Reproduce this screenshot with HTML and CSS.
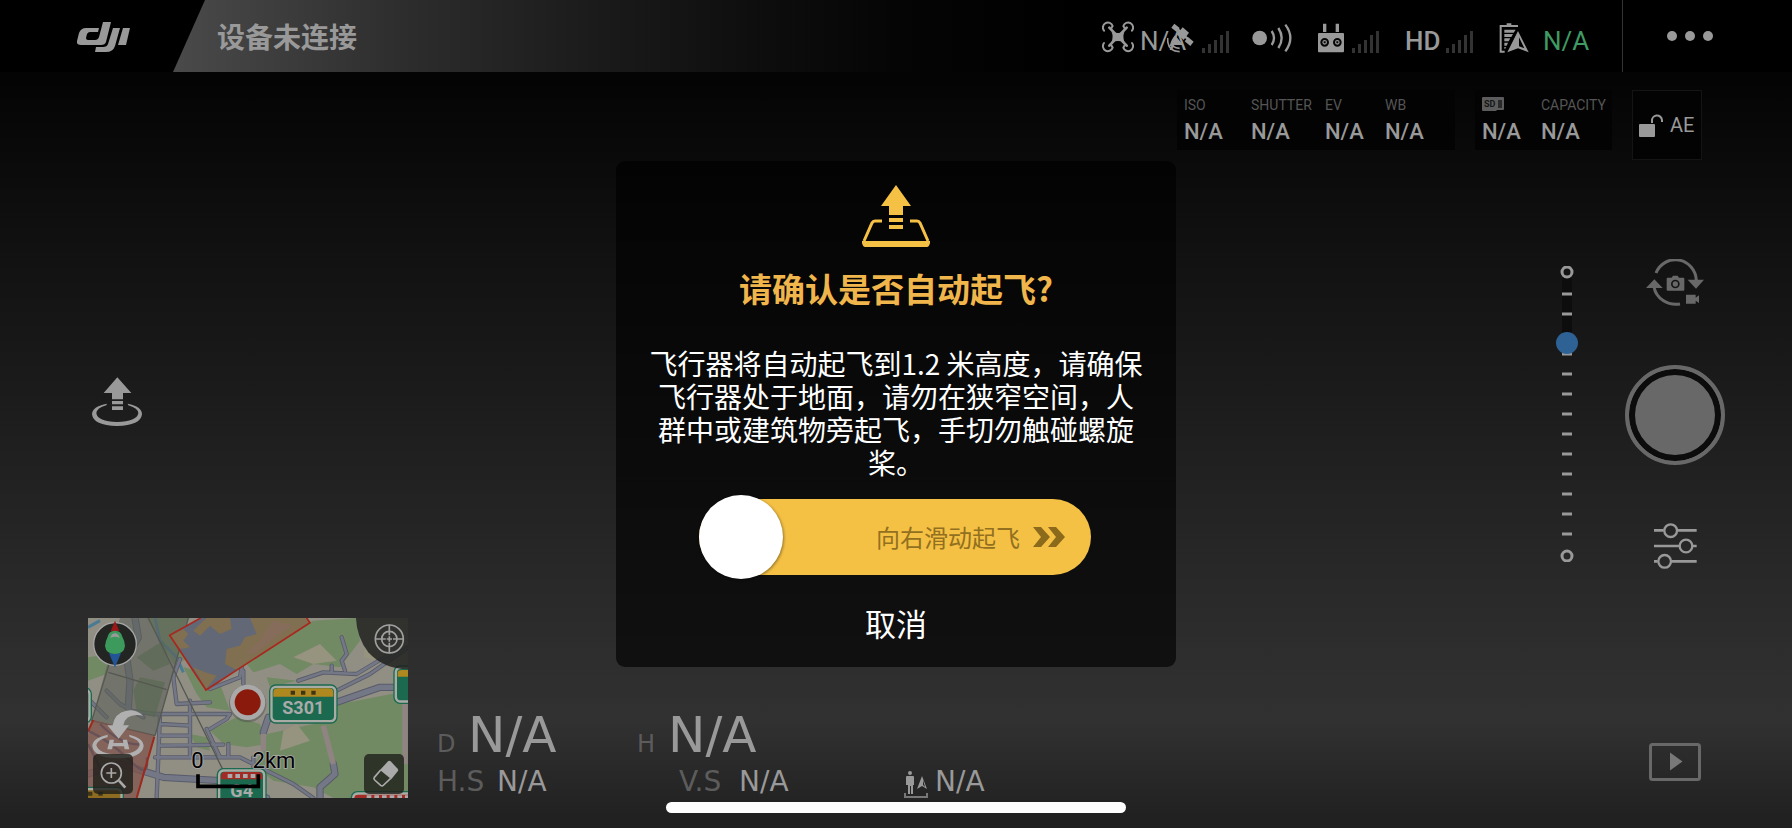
FILE: index.html
```
<!DOCTYPE html>
<html lang="zh-CN">
<head>
    <meta charset="UTF-8">
    <meta name="viewport" content="width=device-width, initial-scale=1.0">
    <title>DJI GO 4</title>
    <link rel="stylesheet" href="styles.css">
</head>
<body>
    <header class="topbar">
        <a class="logo" href="#" aria-label="DJI">
            <svg width="53" height="30" viewBox="0 0 53 30">
                <path d="M26 0H34L29 20Q28 23 24 23H4Q-1 23 0 19L2 11Q4 6 9 6H22L21 10H13Q11 10 10 12L9 16Q9 18 11 18H18Q21 18 22 15Z"/>
                <path d="M36 6H43L38 24Q36 30 29 30H18L19 25H26Q30 25 31 22Z"/>
                <path d="M46 6H53L49 23H41Z"/>
            </svg>
        </a>
        <h1 class="device-title">设备未连接</h1>

        <div class="status">
            <div class="status-item">
                <svg width="32" height="32" viewBox="69 65 96 96">
                    <g fill="none" stroke="#999" stroke-width="6" stroke-linecap="round">
                        <path d="M75 94A15 15 0 1 1 101 80L97 87M159 94A15 15 0 1 0 133 80L137 87M75 131A15 15 0 1 0 101 145L97 138M159 131A15 15 0 1 1 133 145L137 138"/>
                        <path stroke-width="8" d="M91 85L143 139M143 85L91 139"/>
                    </g>
                    <path fill="#999" d="M98 98Q117 104 136 98Q130 113 137 129Q117 121 97 129Q104 113 98 98Z"/>
                </svg>
                <span class="status-text gps-text">N/A</span>
                <svg class="satellite" width="27" height="30" viewBox="262 67 81 90">
                    <g fill="#999">
                        <path d="M284 69L300 82L291 94L275 81ZM309 80L328 96L312 118L292 101ZM325 109L342 123L332 136L315 122ZM292 88L298 84L329 114L324 120Z"/>
                        <path d="M286 104L306 128L270 137Q275 115 286 104Z"/>
                    </g>
                    <path fill="none" stroke="#999" stroke-width="5" d="M264 112Q262 151 300 153M277 124Q276 142 300 143"/>
                </svg>
                <svg class="bars" width="27" height="22" viewBox="0 0 27 22"><path d="M0 17h3v5h-3zM6 13h3v9h-3zM12 9h3v13h-3zM18 4h3v18h-3zM24 0h3v22h-3z"/></svg>
            </div>
            <div class="status-item vision">
                <svg width="40" height="30" viewBox="515 70 120 90">
                    <circle cx="538" cy="115" r="22" fill="#999"/>
                    <path fill="none" stroke="#999" stroke-width="7" d="M574 94Q588 115 574 136M594 85Q614 115 594 145M615 75Q645 115 615 155"/>
                </svg>
            </div>
            <div class="status-item">
                <svg width="26" height="30" viewBox="714 69 78 90">
                    <path fill="#999" d="M729 71H739V96H729ZM767 71H777V96H767ZM717 99H789Q792 99 792 102V154Q792 157 789 157H717Q714 157 714 154V102Q714 99 717 99Z"/>
                    <circle cx="734" cy="127" r="10" fill="#999" stroke="#050505" stroke-width="6"/>
                    <circle cx="772" cy="127" r="10" fill="#999" stroke="#050505" stroke-width="6"/>
                    <path fill="#050505" d="M731 124h6v6h-6zM769 124h6v6h-6z"/>
                </svg>
                <svg class="bars" width="27" height="22" viewBox="0 0 27 22"><path d="M0 17h3v5h-3zM6 13h3v9h-3zM12 9h3v13h-3zM18 4h3v18h-3zM24 0h3v22h-3z"/></svg>
            </div>
            <div class="status-item">
                <span class="status-text hd-text">HD</span>
                <svg class="bars" width="27" height="22" viewBox="0 0 27 22"><path d="M0 17h3v5h-3zM6 13h3v9h-3zM12 9h3v13h-3zM18 4h3v18h-3zM24 0h3v22h-3z"/></svg>
            </div>
            <div class="status-item">
                <svg width="30" height="30" viewBox="208 68 90 90">
                    <g fill="#999">
                        <path d="M231 69h14v5h20v6h-49v71h9v6h-15v-83h21z"/>
                        <path d="M224 88h34l-6 9h-28zM224 101h26l-5 9h-21zM224 114h18l-5 9h-13zM224 127h11l-4 9h-7zM224 140h5l-2 5h-3z"/>
                        <path fill-rule="evenodd" d="M265 92L297 156L265 144L233 156ZM268 111V138L284 144Z"/>
                    </g>
                </svg>
                <span class="status-text battery-text">N/A</span>
            </div>
        </div>
        <button class="menu" type="button" aria-label="更多">
            <svg width="46" height="10" viewBox="0 0 46 10"><circle cx="5" cy="5" r="5"/><circle cx="23" cy="5" r="5"/><circle cx="41" cy="5" r="5"/></svg>
        </button>
    </header>

    <main class="stage">
        <div class="camera-bar">
            <dl class="camera-info">
                <div class="w-shutter"><dt>ISO</dt><dd>N/A</dd></div>
                <div class="w-ev"><dt>SHUTTER</dt><dd>N/A</dd></div>
                <div class="w-wb"><dt>EV</dt><dd>N/A</dd></div>
                <div class="w-last"><dt>WB</dt><dd>N/A</dd></div>
            </dl>
            <dl class="camera-info">
                <div class="w-sd">
                    <dt>
                        <svg width="22" height="14" viewBox="0 0 22 14" aria-label="SD">
                            <path fill="#5c5c5c" d="M1 0h20q1 0 1 1v11q0 1-1 1h-6l-1 1h-13q-1 0-1-1v-12q0-1 1-1z"/>
                            <text x="2" y="10" class="sd-text">SD</text>
                            <path fill="#2a2a2a" d="M16 3h4v8h-4z"/>
                        </svg>
                    </dt>
                    <dd>N/A</dd>
                </div>
                <div class="w-capacity"><dt>CAPACITY</dt><dd>N/A</dd></div>
            </dl>
            <button class="ae-lock" type="button">
                <svg width="25" height="23" viewBox="0 0 25 23">
                    <rect x="0" y="10" width="16" height="13" rx="1" fill="#999"/>
                    <path d="M13 9V7a5 5 0 0 1 10-1v2" fill="none" stroke="#999" stroke-width="2"/>
                </svg>
                AE
            </button>
        </div>

        <div class="middle">
            <button class="icon-button takeoff" type="button" aria-label="自动起飞">
                <svg width="50" height="49" viewBox="66 78 150 147">
                    <path fill="#999" d="M142 79L184 126H159V145H126V126H101ZM126 150H159V160H126ZM126 166H159V177H126Z"/>
                    <path fill="#999" fill-rule="evenodd" d="M111 158Q66 166 66 190Q70 224 141 225Q212 224 216 190Q216 166 173 158L175 163Q205 172 205 187Q200 212 141 213Q83 212 79 187Q80 171 109 163Z"/>
                </svg>
            </button>

            <div class="ev-slider">
                <svg width="22" height="296" viewBox="0 0 22 296">
                    <rect x="6" y="12" width="10" height="64" fill="#0d0d0d"/>
                    <g fill="none" stroke="#999" stroke-width="3">
                        <circle cx="11" cy="6" r="5"/>
                        <circle cx="11" cy="290" r="5"/>
                        <path d="M6 28h10M6 48h10M6 88h10M6 108h10M6 128h10M6 148h10M6 168h10M6 188h10M6 208h10M6 228h10M6 248h10M6 268h10"/>
                    </g>
                </svg>
                <input type="range" min="0" max="100" value="24" aria-label="云台俯仰">
            </div>

            <div class="shoot">
                <button class="icon-button" type="button" aria-label="拍照录像切换">
                    <svg width="58" height="48" viewBox="318 53 174 144">
                        <g fill="none" stroke="#686868" stroke-width="9">
                            <path d="M348 95A63 65 0 0 1 469 117"/>
                            <path d="M342 137A67 62 0 0 0 420 188"/>
                        </g>
                        <path fill="#686868" d="M443 115H492L468 142ZM318 140L343 114L368 140ZM438 160H467V169L477 162V185L467 178V187H438Z"/>
                        <path fill="#686868" fill-rule="evenodd" d="M383 109H395L399 103H413L417 109H430Q433 109 433 112V145Q433 148 430 148H383Q380 148 380 145V112Q380 109 383 109ZM406 115A13 13 0 1 0 406 141A13 13 0 1 0 406 115ZM406 120A8 8 0 1 1 406 136A8 8 0 1 1 406 120Z"/>
                    </svg>
                </button>
                <button class="shutter" type="button" aria-label="拍照"></button>
                <button class="icon-button" type="button" aria-label="相机设置">
                    <svg width="43" height="46" viewBox="339 218 129 138">
                        <g fill="none" stroke="#999" stroke-width="7">
                            <path stroke-width="8" d="M339 240H368M410 240H467M339 287H414M456 287H467M339 333H350M392 333H467"/>
                            <circle cx="389" cy="241" r="19"/><circle cx="435" cy="287" r="19"/><circle cx="371" cy="333" r="19"/>
                        </g>
                    </svg>
                </button>
            </div>
        </div>

        <div class="bottom">
            <div class="map">
                <svg class="map-canvas" width="320" height="180" viewBox="24 52 960 540">
                    <rect x="24" y="52" width="960" height="540" fill="#918e84"/>
                    <!-- parks and woods -->
                    <g fill="#728a64">
                        <path d="M200 52H330L300 90L340 170L280 190L240 120ZM560 120L700 60L830 52L840 120L780 200L700 190L650 220L600 190L520 215L500 190Z"/>
                        <path d="M310 200L370 215L420 250L450 330L380 320L350 280ZM560 400L700 370L780 310L984 270V592H760L700 560L580 540L520 490L550 450ZM390 390L470 350L540 370L560 430L500 440L430 430Z"/>
                        <path d="M24 170L90 160L80 220L24 240ZM330 400L380 410L390 450L350 440ZM560 230L650 240L570 260Z"/>
                    </g>
                    <path fill="#96937f" d="M610 390L650 370L690 420L600 450ZM640 170L720 130L770 180L700 190ZM860 100L960 160L930 190L850 170Z"/>
                    <g fill="none" stroke="#4b7a93" stroke-width="9"><path d="M24 80L60 60M225 52L240 120L290 170L310 215"/></g>
                    <!-- roads -->
                    <g fill="none" stroke="#585b69" stroke-linejoin="round" stroke-linecap="round">
                        <path stroke-width="22" d="M165 52L175 110L140 170L150 240L145 320M24 520L120 490L250 530L420 540L560 592M984 260H900L770 305M565 350L550 395M760 490L765 520L720 560V592"/>
                        <path stroke-width="13" d="M490 170L480 230L390 265M490 210V250M300 175L280 230L290 310L390 305M150 330L220 340H450L440 355L390 385M655 240L730 215L830 220L930 160M755 195V215M785 110L800 160L785 180L795 210M770 270L870 220L984 140M240 340L230 592M330 300V470M240 370L330 375M240 405H330M240 435L430 432M225 470H480L640 550L700 592M30 300L80 350M80 270L120 310L190 350M445 430V470M380 385L420 470M520 470V500"/>
                    </g>
                    <g fill="none" stroke="#747785" stroke-linejoin="round" stroke-linecap="round">
                        <path stroke-width="16" d="M165 52L175 110L140 170L150 240L145 320M24 520L120 490L250 530L420 540L560 592M984 260H900L770 305M565 350L550 395M760 490L765 520L720 560V592"/>
                        <path stroke-width="8" d="M490 170L480 230L390 265M490 210V250M300 175L280 230L290 310L390 305M150 330L220 340H450L440 355L390 385M655 240L730 215L830 220L930 160M755 195V215M785 110L800 160L785 180L795 210M770 270L870 220L984 140M240 340L230 592M330 300V470M240 370L330 375M240 405H330M240 435L430 432M225 470H480L640 550L700 592M30 300L80 350M80 270L120 310L190 350M445 430V470M380 385L420 470M520 470V500"/>
                    </g>
                    <path fill="none" stroke="#8f8482" stroke-width="16" d="M730 375L760 490M550 400V450M975 310V490"/>
                    <!-- restricted zones -->
                    <path fill="#5d6058" fill-opacity=".6" d="M120 52H325L225 405L35 360Z"/>
                    <path fill="#566950" fill-opacity=".6" d="M180 230L255 245L225 350L170 330L160 270ZM170 170L250 120L270 190L220 210Z"/>
                    <path fill="none" stroke="#555851" stroke-width="4" d="M325 52L225 405M85 215L260 267M100 150L35 360L225 405M205 52L430 510"/>
                    <path fill="#80544c" fill-opacity=".75" d="M40 358L223 405L170 592H24V400Z"/>
                    <path fill="none" stroke="#685257" stroke-width="7" d="M24 390Q90 420 150 480T200 470M60 370Q130 440 190 430M24 430L90 560"/>
                    <path fill="none" stroke="#9d281d" stroke-width="6" d="M24 392L40 358M223 408L170 592"/>
                    <path fill="#626875" d="M362 52H680L690 66L378 268L269 104Z"/>
                    <path fill="#816f51" d="M360 70L380 52H450L455 85L420 100L390 75L360 105L340 90ZM510 52H680L688 66L470 208L435 190L440 145L480 135L495 110L530 100ZM270 106L310 85L325 100L310 120L330 140L300 145ZM340 200L375 215L410 225L378 266Z"/>
                    <path fill="#8a6d63" d="M580 60L640 75L600 100L520 160L500 155L540 120Z" fill-opacity=".6"/>
                    <path fill="none" stroke="#a9271c" stroke-width="5" d="M362 52L269 104L378 268L690 66L680 52"/>
                    <!-- road shields -->
                    <g stroke="#1b6a50" stroke-width="4">
                        <rect x="569" y="253" width="202" height="114" rx="18" fill="#a9aba5"/>
                        <rect x="412" y="504" width="146" height="114" rx="18" fill="#a9aba5"/>
                        <rect x="942" y="196" width="90" height="112" rx="18" fill="#a9aba5"/>
                        <rect x="814" y="573" width="220" height="60" rx="18" fill="#a9aba5"/>
                        <rect x="-80" y="262" width="114" height="104" rx="18" fill="#a9aba5"/>
                        <rect x="-20" y="560" width="150" height="60" rx="18" fill="#a9aba5"/>
                    </g>
                    <g fill="#1b6a50">
                        <rect x="578" y="262" width="184" height="96" rx="11"/>
                        <rect x="421" y="513" width="128" height="96" rx="11"/>
                        <rect x="951" y="205" width="80" height="94" rx="11"/>
                        <rect x="-80" y="271" width="105" height="86" rx="11"/>
                    </g>
                    <rect x="823" y="582" width="200" height="40" rx="11" fill="#a22c25"/>
                    <rect x="-20" y="569" width="141" height="40" rx="11" fill="#8d6c22"/>
                    <path fill="#b08820" d="M580 288V276Q580 263 594 263H746Q760 263 760 276V288ZM953 228V218Q953 208 966 208H984V228Z"/>
                    <path fill="#a22c25" d="M423 536V528Q423 514 437 514H533Q547 514 547 528V536Z"/>
                    <path stroke="#3e3515" stroke-width="12" stroke-dasharray="13 18" d="M632 276H712"/>
                    <path stroke="#aaa" stroke-width="12" stroke-dasharray="14 9" d="M443 526H530M860 590H984"/>
                    <path stroke="#3e3515" stroke-width="12" stroke-dasharray="13 18" d="M24 579H80"/>
                    <text x="670" y="340" class="shield-text">S301</text>
                    <text x="485" y="590" class="shield-text">G4</text>
                    <!-- position -->
                    <circle cx="503" cy="309" r="56" fill="#444" opacity=".4"/>
                    <circle cx="503" cy="305" r="53" fill="#a9a9a9"/>
                    <circle cx="503" cy="305" r="39" fill="#8a1a0b"/>
                    <!-- scale -->
                    <path fill="none" stroke="#000" stroke-width="11" d="M354 521V557H535V521"/>
                    <g class="scale-text"><text x="352" y="502">0</text><text x="582" y="502">2km</text></g>
                </svg>
                <button class="map-button compass" type="button" aria-label="指南针">
                    <svg width="44" height="48" viewBox="39 58 132 144">
                        <circle cx="105" cy="130" r="64" fill="#232522" stroke="#a7a7a7" stroke-width="4"/>
                        <path fill="#9b1616" d="M105 60L118 92H92Z"/>
                        <path fill="#225596" d="M87 158H123L105 200Z"/>
                        <path fill="#3c9a5c" d="M105 90Q123 90 127 108Q135 122 135 136Q132 160 105 160Q78 160 75 136Q76 122 83 108Q87 90 105 90Z"/>
                        <path fill="#999" d="M91 112Q94 98 105 98Q116 98 119 112Q105 104 91 112Z"/>
                    </svg>
                </button>
                <button class="map-button locate" type="button" aria-label="定位">
                    <svg width="52" height="52" viewBox="828 52 156 156">
                        <path fill="#20211f" fill-opacity=".85" d="M828 52H984V206Q910 205 865 155Q830 110 828 52Z"/>
                        <g fill="none" stroke="#a0a0a0" stroke-width="5">
                            <circle cx="928" cy="115" r="42"/><circle cx="928" cy="115" r="23"/>
                            <path d="M928 72V104M928 126V158M885 115H917M939 115H971M920 115H936M928 107V123"/>
                        </g>
                    </svg>
                </button>
                <button class="map-button home" type="button" aria-label="返航">
                    <svg width="52" height="50" viewBox="35 325 156 150">
                        <path fill="#b0b0b0" d="M189 345Q165 325 138 330Q103 337 97 374H81L115 414L146 374H129Q136 336 189 345Z"/>
                        <path fill="#b0b0b0" fill-rule="evenodd" d="M82 402Q36 412 36 436Q40 472 113 473Q186 472 190 436Q190 412 146 402L148 409Q178 418 178 434Q170 461 113 462Q56 461 48 434Q50 418 82 409Z"/>
                        <path fill="#b0b0b0" d="M88 417H101L99 427H129L127 417H140L147 446H133L131 437H97L95 446H81Z"/>
                    </svg>
                </button>
                <button class="map-button square zoom-map" type="button" aria-label="放大">
                    <svg width="40" height="40" viewBox="37 460 120 120">
                        <g fill="none" stroke="#aaa" stroke-width="5"><circle cx="92" cy="517" r="30"/><path d="M92 502V532M77 517H107"/><path stroke-width="8" d="M115 540L134 561"/></g>
                    </svg>
                </button>
                <button class="map-button square clear-map" type="button" aria-label="清除航线">
                    <svg width="40" height="40" viewBox="852 460 120 120">
                        <path fill="#aaa" d="M924 482Q928 479 932 482L953 504Q956 508 953 512L934 536L900 508Z"/>
                        <path fill="none" stroke="#aaa" stroke-width="5" d="M902 508L883 530Q880 534 884 538L902 554Q907 558 911 553L932 533"/>
                    </svg>
                </button>
            </div>

            <div class="telemetry">
                <div class="telemetry-row large">
                    <div class="distance"><span class="label">D</span><span class="value">N/A</span></div>
                    <div><span class="label">H</span><span class="value">N/A</span></div>
                </div>
                <div class="telemetry-row">
                    <div class="h-speed"><span class="label">H.S</span><span class="value">N/A</span></div>
                    <div class="v-speed"><span class="label">V.S</span><span class="value">N/A</span></div>
                    <div class="pilot">
                        <svg width="24" height="27" viewBox="0 0 24 27">
                            <path fill="#999" d="M6 0a2 2 0 0 1 0 4a2 2 0 0 1 0-4M3 5h6q1 0 1 1v8h-1v9h-2v-8h-1v8h-2v-9h-2v-8q0-1 1-1z"/>
                            <path fill="#999" fill-rule="evenodd" d="M18 5l5 13l-5-3l-5 3zM19 9v5l2 2z"/>
                            <path fill="none" stroke="#777" stroke-width="2" d="M1 22v4h22v-4"/>
                        </svg>
                        <span class="value">N/A</span>
                    </div>
                </div>
            </div>

            <button class="icon-button playback" type="button" aria-label="回放">
                <svg width="52" height="38" viewBox="0 0 104 76">
                    <rect x="3" y="3" width="98" height="70" rx="4" fill="none" stroke="#686868" stroke-width="6"/>
                    <path fill="#787878" d="M42 19L67 37L42 55Z"/>
                </svg>
            </button>
        </div>
    </main>

    <div class="modal" role="dialog" aria-labelledby="takeoff-title">
        <svg width="68" height="62" viewBox="0 0 68 62">
            <path fill="#f5c144" d="M34 0L49 21H41V30H27V21H19ZM27 33H41V37H27ZM27 40H41V44H27Z"/>
            <path fill="none" stroke="#f5c144" stroke-width="3" d="M20 36H13Q11 36 10 38L2 56M48 36H55Q57 36 58 38L66 56"/>
            <path fill="#f5c144" d="M0 56H68V58Q67 62 65 62H3Q1 62 0 58Z"/>
        </svg>
        <h2 id="takeoff-title">请确认是否自动起飞?</h2>
        <p>飞行器将自动起飞到1.2 米高度，请确保飞行器处于地面，请勿在狭窄空间，人群中或建筑物旁起飞，手切勿触碰螺旋桨。</p>
        <div class="slide">
            <input type="range" id="slide-takeoff" min="0" max="100" value="0">
            <label for="slide-takeoff">
                向右滑动起飞
                <svg width="32" height="20" viewBox="0 0 32 20"><path d="M0 0H8L17 10L8 20H0L8 10ZM15 0H23L32 10L23 20H15L23 10Z"/></svg>
            </label>
        </div>
        <button class="cancel" type="button">取消</button>
    </div>

    <div class="home-indicator"></div>
</body>
</html>
```
FILE: styles.css
```
* {
    box-sizing: border-box;
}

body {
    display: flex;
    flex-direction: column;
    min-height: 100vh;
    margin: 0;
    position: relative;
    background: linear-gradient(#030303 8%, #111 30%, #1e1e1e 52%, #2c2c2c 76%, #313131 87%, #1f1f1f 100%);
    color: #999;
    font-family: Roboto, "Noto Sans CJK SC", sans-serif;
}

button {
    padding: 0;
    border: 0;
    background: none;
    color: inherit;
    font-family: inherit;
    cursor: pointer;
}

svg {
    display: block;
    flex-shrink: 0;
}

h1, h2, p, dl, dd {
    margin: 0;
}

/* top bar */
.topbar {
    display: flex;
    height: 72px;
    background: #000;
}

.logo {
    width: 173px;
    padding: 22px 0 0 77px;
    fill: #999;
}

.device-title {
    flex: 1;
    padding-left: 44px;
    background: linear-gradient(90deg, #4a4a4a, #2c2c2c 240px, #1a1a1a 430px, #0e0e0e 580px, #050505 720px, #000 900px);
    clip-path: polygon(32px 0, 100% 0, 100% 100%, 0 100%);
    font-size: 28px;
    font-weight: 700;
    line-height: 72px;
    font-family: "Noto Sans CJK SC", sans-serif;
}

.status {
    display: flex;
    align-items: flex-end;
    gap: 26px;
    padding: 0 34px 19px 0;
}

.status-item {
    display: flex;
    align-items: flex-end;
}

.status-text {
    font-size: 26px;
    line-height: 24px;
}

.gps-text {
    width: 45px;
    margin-left: 6px;
}

.satellite {
    margin-left: -18px;
}

.vision {
    margin-left: -3px;
}

.bars {
    margin-left: 8px;
    fill: #333;
}

.hd-text {
    width: 33px;
    font-weight: 500;
}

.battery-text {
    width: 45px;
    margin-left: 14px;
    color: #3f9a63;
}

.menu {
    display: flex;
    align-items: center;
    justify-content: center;
    width: 170px;
    padding-right: 36px;
    border-left: 1px solid #333;
    fill: #999;
}

/* stage */
.stage {
    flex: 1;
    display: flex;
    flex-direction: column;
    padding-bottom: 30px;
}

.camera-bar {
    display: flex;
    justify-content: flex-end;
    align-items: flex-start;
    gap: 20px;
    padding: 18px 90px 0 0;
}

.camera-info {
    display: flex;
    height: 60px;
    padding: 7px 0 0 7px;
    background: #030303;
}

.camera-info dt {
    height: 16px;
    color: #555;
    font-size: 14px;
    line-height: 16px;
}

.camera-info dd {
    margin-top: 7px;
    font-size: 22px;
    font-weight: 500;
    line-height: 24px;
}

.w-shutter {
    width: 67px;
}

.w-ev {
    width: 74px;
}

.w-wb {
    width: 60px;
}

.w-last {
    width: 70px;
}

.w-sd {
    width: 59px;
}

.w-capacity {
    width: 71px;
}

.sd-text {
    fill: #151515;
    font-size: 9px;
    font-weight: 700;
}

.ae-lock {
    display: flex;
    align-items: center;
    gap: 6px;
    width: 70px;
    height: 70px;
    padding-left: 6px;
    border: 1px solid #141414;
    background: #030303;
    font-size: 20px;
}

.middle {
    flex: 1;
    display: flex;
    align-items: center;
    padding: 50px 67px 0 92px;
}

.takeoff {
    margin: 0 auto 26px 0;
}

.ev-slider {
    position: relative;
    margin-right: 47px;
}

.ev-slider input {
    position: absolute;
    inset: 0;
    width: 22px;
    height: 296px;
    margin: 0;
    background: none;
    appearance: none;
    writing-mode: vertical-lr;
}

.ev-slider input::-webkit-slider-thumb {
    width: 22px;
    height: 22px;
    border-radius: 50%;
    background: #2e6295;
    appearance: none;
}

.shoot {
    display: flex;
    flex-direction: column;
    align-items: center;
    gap: 58px;
}

.shutter {
    width: 100px;
    height: 100px;
    border: 4px solid #686868;
    border-radius: 50%;
    background: #686868;
    box-shadow: inset 0 0 0 6px #0c0c0c;
}

.bottom {
    display: flex;
    align-items: flex-end;
    padding: 0 91px 0 88px;
}

/* map */
.map {
    position: relative;
    width: 320px;
    height: 180px;
    overflow: hidden;
}

.shield-text {
    fill: #aaa;
    font: 700 54px Roboto, sans-serif;
    text-anchor: middle;
}

.scale-text {
    fill: #000;
    stroke: #aaa;
    stroke-width: 5px;
    font: 66px Roboto, sans-serif;
    text-anchor: middle;
    paint-order: stroke;
}

.map-button {
    position: absolute;
}

.compass {
    top: 2px;
    left: 5px;
}

.locate {
    top: 0;
    right: 0;
}

.home {
    bottom: 39px;
    left: 4px;
}

.square {
    bottom: 4px;
    border-radius: 5px;
    background: rgba(30, 30, 26, 0.8);
}

.zoom-map {
    left: 5px;
}

.clear-map {
    right: 4px;
}

/* telemetry */
.telemetry {
    margin-left: 29px;
    font-family: "DejaVu Sans", sans-serif;
}

.telemetry-row,
.telemetry-row > div {
    display: flex;
    align-items: baseline;
}

.telemetry-row {
    height: 32px;
    font-size: 28px;
    line-height: 32px;
}

.telemetry-row .label {
    width: 60px;
    color: #5c5c5c;
}

.telemetry-row.large {
    height: 50px;
    margin-bottom: 6px;
}

.large .label {
    width: 31px;
    font-size: 24px;
}

.large .value {
    font-size: 50px;
    line-height: 50px;
}

.distance {
    width: 200px;
}

.h-speed {
    width: 242px;
}

.v-speed {
    width: 225px;
}

.pilot {
    gap: 7px;
}

.pilot svg {
    align-self: flex-end;
}

.playback {
    margin: 0 0 17px auto;
}

/* takeoff dialog */
.modal {
    position: absolute;
    top: 50%;
    left: 50%;
    display: flex;
    flex-direction: column;
    align-items: center;
    width: 560px;
    padding: 24px 28px;
    border-radius: 9px;
    background: rgba(0, 0, 0, 0.64);
    transform: translate(-50%, -50%);
    color: #fff;
    font-family: "Noto Sans CJK SC", sans-serif;
}

.modal h2 {
    margin-top: 21px;
    color: #f1b64b;
    font-size: 33px;
    font-weight: 700;
    line-height: 40px;
}

.modal p {
    width: 500px;
    margin-top: 39px;
    font-size: 28px;
    line-height: 33px;
    text-align: center;
}

.slide {
    position: relative;
    width: 392px;
    height: 84px;
    margin: 16px 2px 0 0;
}

.slide input {
    display: block;
    width: 100%;
    height: 84px;
    margin: 0;
    background: none;
    appearance: none;
}

.slide input::-webkit-slider-runnable-track {
    height: 76px;
    border-radius: 38px;
    background: #f5c144;
}

.slide input::-webkit-slider-thumb {
    width: 84px;
    height: 84px;
    margin-top: -4px;
    border-radius: 50%;
    background: #fff;
    box-shadow: 1px 1px 3px rgba(0, 0, 0, 0.4);
    appearance: none;
}

.slide label {
    position: absolute;
    top: 22px;
    right: 26px;
    display: flex;
    align-items: center;
    gap: 13px;
    color: #92701f;
    font-size: 24px;
    line-height: 40px;
    pointer-events: none;
    fill: #8b6a1c;
}

.cancel {
    height: 40px;
    margin-top: 24px;
    font-size: 31px;
    line-height: 40px;
}

.home-indicator {
    position: absolute;
    bottom: 15px;
    left: 50%;
    width: 460px;
    height: 11px;
    border-radius: 6px;
    background: #fff;
    transform: translateX(-50%);
}
```
